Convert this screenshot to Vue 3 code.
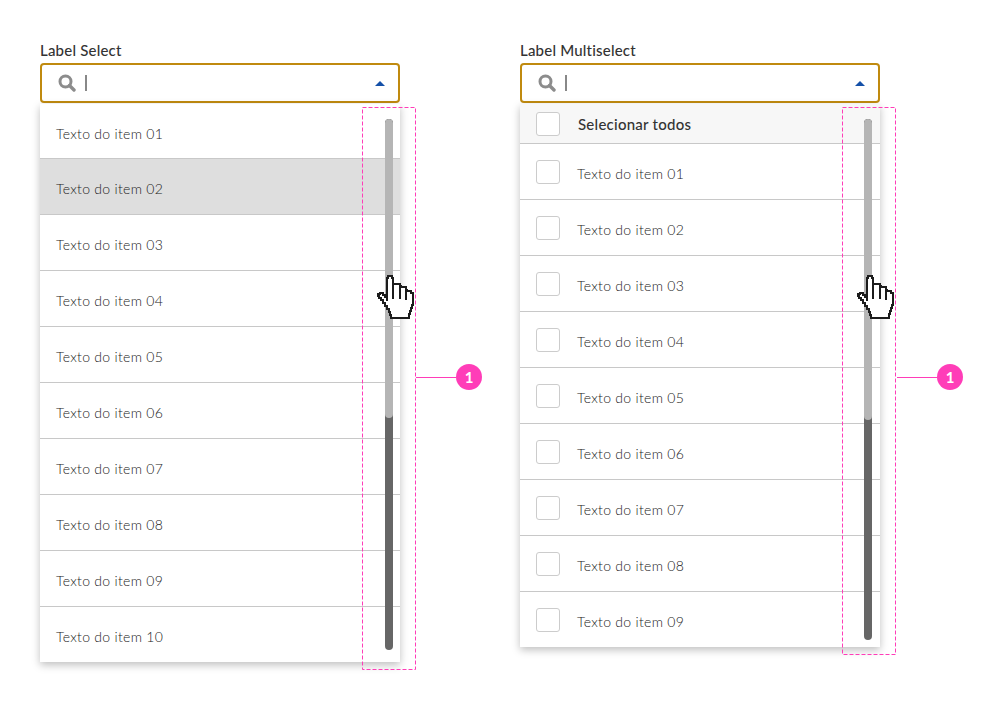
<template>
  <div class="page">
    <section class="field">
      <label class="field-label">Label Select</label>
      <div class="input-box">
        <svg class="search-icon" viewBox="0 0 18 18" width="18" height="18">
          <circle cx="7.5" cy="7.5" r="5.5" fill="none" stroke="#8c8c8c" stroke-width="3" />
          <path d="M11.5 11.5L16 16" stroke="#8c8c8c" stroke-width="3.4" stroke-linecap="round" />
        </svg>
        <span class="caret"></span>
        <span class="arrow-up"></span>
      </div>
      <div class="dropdown single">
        <div
          v-for="(item, i) in singleItems"
          :key="item"
          class="row"
          :class="{ selected: i === 1, last: i === singleItems.length - 1 }"
        >
          <span class="item-text">{{ item }}</span>
        </div>
        <div class="scrollbar">
          <div class="thumb" :style="{ height: '299px' }"></div>
        </div>
        <svg class="hand" viewBox="0 0 37 46" width="37" height="46" shape-rendering="crispEdges">
          <path :d="handPath" fill="#fff" stroke="#1c1c1c" stroke-width="2" />
          <path :d="fingerLines" fill="none" stroke="#1c1c1c" stroke-width="2" />
        </svg>
      </div>
      <div class="note">
        <svg class="note-box" width="54" height="563" viewBox="0 0 54 563">
          <rect x="0.5" y="0.5" width="53" height="562" fill="none" stroke="#ff3db8" stroke-dasharray="4 2" />
        </svg>
        <span class="note-line"></span>
        <span class="badge">1</span>
      </div>
    </section>

    <section class="field">
      <label class="field-label">Label Multiselect</label>
      <div class="input-box">
        <svg class="search-icon" viewBox="0 0 18 18" width="18" height="18">
          <circle cx="7.5" cy="7.5" r="5.5" fill="none" stroke="#8c8c8c" stroke-width="3" />
          <path d="M11.5 11.5L16 16" stroke="#8c8c8c" stroke-width="3.4" stroke-linecap="round" />
        </svg>
        <span class="caret"></span>
        <span class="arrow-up"></span>
      </div>
      <div class="dropdown multi">
        <div class="row head">
          <span class="check"></span>
          <span class="head-text">Selecionar todos</span>
        </div>
        <div
          v-for="(item, i) in multiItems"
          :key="item"
          class="row check-row"
          :class="{ last: i === multiItems.length - 1 }"
        >
          <span class="check"></span>
          <span class="item-text">{{ item }}</span>
        </div>
        <div class="scrollbar">
          <div class="thumb" :style="{ height: '301px' }"></div>
        </div>
        <svg class="hand" viewBox="0 0 37 46" width="37" height="46" shape-rendering="crispEdges">
          <path :d="handPath" fill="#fff" stroke="#1c1c1c" stroke-width="2" />
          <path :d="fingerLines" fill="none" stroke="#1c1c1c" stroke-width="2" />
        </svg>
      </div>
      <div class="note note-multi">
        <svg class="note-box" width="54" height="548" viewBox="0 0 54 548">
          <rect x="0.5" y="0.5" width="53" height="547" fill="none" stroke="#ff3db8" stroke-dasharray="4 2" />
        </svg>
        <span class="note-line"></span>
        <span class="badge">1</span>
      </div>
    </section>
  </div>
</template>

<script setup>
const pad = (n) => String(n).padStart(2, '0')
const singleItems = Array.from({ length: 10 }, (_, i) => `Texto do item ${pad(i + 1)}`)
const multiItems = Array.from({ length: 9 }, (_, i) => `Texto do item ${pad(i + 1)}`)

const handPath =
  'M10 26V3H11V1H15V3H16V9H23V11H24V12H29V15H30V16H34V18H36V30H35V33H34V36H33V39H32V43H14V40H13V37H12V34H10V31H8V28H6V25H4V23H2V21H1V19H3V18H6V20H8V22H10Z'
const fingerLines = 'M16 9V24M23 11V24M29 15V25'
</script>

<style scoped>
.page {
  display: flex;
  gap: 120px;
  box-sizing: border-box;
  min-height: 710px;
  padding: 43px 0 0 40px;
  font-family: Lato, "Open Sans", sans-serif;
  color: #222;
}

.field {
  position: relative;
  width: 360px;
}

.field-label {
  display: block;
  height: 20px;
  line-height: 14px;
  font-size: 15px;
  letter-spacing: 0.2px;
  font-weight: 500;
  color: #333;
}

.input-box {
  display: flex;
  align-items: center;
  height: 40px;
  box-sizing: border-box;
  padding: 0 13px 0 16px;
  background: #fff;
  border: 2px solid #c08a0f;
  border-radius: 4px;
}

.search-icon {
  flex: none;
}

.caret {
  width: 2px;
  height: 16px;
  margin-left: 9px;
  background: #888;
}

.arrow-up {
  width: 0;
  height: 0;
  margin-left: auto;
  border-left: 5px solid transparent;
  border-right: 5px solid transparent;
  border-bottom: 5px solid #1450a8;
}

.dropdown {
  position: relative;
  margin-top: 1px;
  background: #fff;
  box-shadow: 0 3px 8px rgba(0, 0, 0, 0.25);
}

.row {
  display: flex;
  align-items: center;
  box-sizing: border-box;
  height: 56px;
  padding-left: 16px;
  font-size: 14px;
  letter-spacing: 0.3px;
  font-weight: 300;
  border-bottom: 1px solid #c8c8c8;
}

.item-text {
  padding-top: 4px;
}

.single .row:first-child {
  height: 55px;
}

.row.last {
  height: 55px;
  border-bottom: none;
}

.selected {
  background: #dedede;
}

.head {
  height: 40px;
  font-size: 15px;
  letter-spacing: 0.25px;
  font-weight: 500;
  color: #333;
  background: #f7f7f7;
}

.head-text {
  margin-left: 18px;
  padding-top: 1px;
}

.check-row {
  gap: 17px;
}

.check {
  flex: none;
  width: 24px;
  height: 24px;
  box-sizing: border-box;
  background: #fff;
  border: 1px solid #ccc;
  border-radius: 3px;
}

.scrollbar {
  position: absolute;
  top: 15px;
  right: 7px;
  bottom: 12px;
  width: 8px;
  overflow: hidden;
  background: #666;
  border-radius: 4px;
}

.multi .scrollbar {
  right: 8px;
  bottom: 7px;
}

.thumb {
  background: #b5b5b5;
  border-radius: 4px;
}

.hand {
  position: absolute;
  top: 171px;
  left: 337px;
}

.note {
  position: absolute;
  top: 64px;
  left: 322px;
  width: 54px;
}

.note-box {
  display: block;
}

.note-line {
  position: absolute;
  top: 270px;
  left: 54px;
  width: 40px;
  height: 1px;
  background: #ff3db8;
}

.note-multi .note-line {
  left: 55px;
}

.badge {
  position: absolute;
  top: 257px;
  left: 94px;
  width: 26px;
  height: 26px;
  line-height: 26px;
  border-radius: 50%;
  text-align: center;
  font-size: 15px;
  font-weight: 700;
  color: #fff;
  background: #ff3db8;
}

.note-multi .badge {
  left: 95px;
}
</style>
